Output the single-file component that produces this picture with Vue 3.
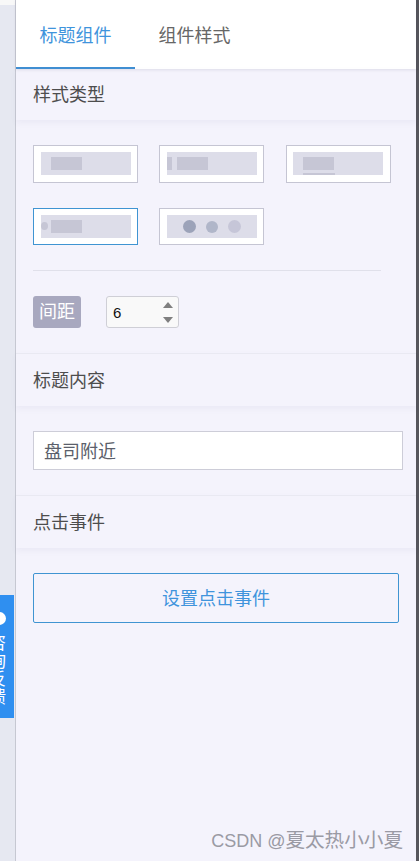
<template>
  <div class="page">
    <div class="side-strip">
      <div class="feedback">
        <span class="feedback-dot"></span>
        <span class="feedback-text">咨询反馈</span>
      </div>
    </div>

    <div class="panel">
      <div class="tabs">
        <div
          v-for="(tab, i) in tabs"
          :key="tab"
          :class="['tab', i === 0 ? 'active' : '']"
        >
          {{ tab }}
        </div>
      </div>

      <div class="section-title first">样式类型</div>

      <div class="style-grid">
        <div
          v-for="item in styleTypes"
          :key="item.id"
          :class="['style-item', item.selected ? 'selected' : '']"
        >
          <div :class="['style-bar', item.kind === 'dots' ? 'bar-dots' : '']">
            <template v-if="item.kind === 'dots'">
              <i class="dot d1"></i>
              <i class="dot d2"></i>
              <i class="dot d3"></i>
            </template>
            <template v-else>
              <i v-if="item.kind === 'stripe'" class="stripe"></i>
              <i v-if="item.kind === 'circle'" class="circle"></i>
              <i class="block"></i>
              <i v-if="item.kind === 'under'" class="underline"></i>
            </template>
          </div>
        </div>
      </div>

      <div class="divider"></div>

      <div class="spacing-row">
        <span class="spacing-label">间距</span>
        <div class="number-input">
          <span class="number-value">6</span>
          <div class="arrows">
            <svg width="10" height="6" viewBox="0 0 10 6"><path d="M5 0 L10 6 L0 6 Z" fill="#7f7f7f" /></svg>
            <svg width="10" height="6" viewBox="0 0 10 6"><path d="M0 0 L10 0 L5 6 Z" fill="#7f7f7f" /></svg>
          </div>
        </div>
      </div>

      <div class="section-title">标题内容</div>
      <div class="section-body">
        <div class="text-input">盘司附近</div>
      </div>

      <div class="section-title">点击事件</div>
      <div class="section-body">
        <div class="event-btn">设置点击事件</div>
      </div>

      <div class="watermark">CSDN @<span class="watermark-name">夏太热小小夏</span></div>
    </div>
    <div class="right-edge"></div>
  </div>
</template>

<script setup>
const tabs = ['标题组件', '组件样式']

const styleTypes = [
  { id: 1, kind: 'plain' },
  { id: 2, kind: 'stripe' },
  { id: 3, kind: 'under' },
  { id: 4, kind: 'circle', selected: true },
  { id: 5, kind: 'dots' }
]
</script>

<style>
html,
body {
  margin: 0;
  background: #f8f8f8;
}
</style>

<style scoped>
.page {
  display: flex;
  width: 419px;
  height: 861px;
  overflow: hidden;
  font-family: "Noto Sans CJK SC", "Liberation Sans", sans-serif;
  color: #4d4d4d;
}

.side-strip {
  position: relative;
  flex: none;
  width: 15px;
  margin-top: 5px;
  background-color: #e6e8f1;
}

.feedback {
  position: absolute;
  left: 0;
  top: 590px;
  width: 14px;
  height: 123px;
  overflow: hidden;
  background-color: #2f8ff0;
  color: white;
}

.feedback-dot {
  position: absolute;
  left: -7px;
  top: 17px;
  width: 13px;
  height: 13px;
  border-radius: 50%;
  background-color: white;
}

.feedback-text {
  position: absolute;
  left: -11px;
  top: 38px;
  width: 17px;
  font-size: 17px;
  line-height: 18px;
}

.panel {
  position: relative;
  flex: 1;
  min-width: 0;
  border-left: 1px solid #c6c8d2;
  background-color: #f4f3fc;
}

.tabs {
  display: flex;
  height: 69px;
  background-color: white;
  box-shadow: 0 1px 3px rgba(60, 60, 90, 0.12);
}

.tab {
  width: 119px;
  height: 67px;
  line-height: 69px;
  text-align: center;
  font-size: 18px;
  color: #666;
}

.tab.active {
  color: #3f94dc;
  border-bottom: 2px solid #3f8ed2;
}

.section-title {
  height: 52px;
  line-height: 50px;
  padding-left: 17px;
  font-size: 18px;
  border-top: 1px solid #e9e9f2;
  box-shadow: 0 3px 6px rgba(90, 90, 130, 0.06);
}

.section-title.first {
  height: 51px;
  line-height: 49px;
  border-top: none;
}

.style-grid {
  display: grid;
  grid-template-columns: 126px 127px 105px;
  grid-template-rows: 38px 37px;
  row-gap: 25px;
  padding: 25px 0 0 17px;
}

.style-item {
  box-sizing: border-box;
  width: 105px;
  padding: 6px 0 0 7px;
  border: 1px solid #c5c5d3;
  background-color: white;
}

.style-item:nth-child(3) {
  padding-left: 6px;
}

.style-item.selected {
  border-color: #3f94d2;
}

.style-bar {
  position: relative;
  display: flex;
  align-items: center;
  width: 90px;
  height: 23px;
  padding-left: 10px;
  box-sizing: border-box;
  background-color: #dddde9;
}

.block {
  width: 31px;
  height: 13px;
  background-color: #c6c6d5;
}

.stripe {
  position: absolute;
  left: 0;
  top: 5px;
  width: 5px;
  height: 13px;
  background-color: #c6c6d5;
}

.circle {
  position: absolute;
  left: 0;
  top: 7px;
  width: 7px;
  height: 8px;
  border-radius: 50%;
  background-color: #c6c6d5;
}

.underline {
  position: absolute;
  left: 10px;
  bottom: 0;
  width: 32px;
  height: 2px;
  background-color: #c6c6d5;
}

.style-bar.bar-dots {
  justify-content: space-between;
  padding: 0 16px;
}

.dot {
  border-radius: 50%;
}

.d1 {
  width: 13px;
  height: 13px;
  background-color: #9ca3b9;
}

.d2 {
  width: 12px;
  height: 12px;
  background-color: #b0b6c9;
}

.d3 {
  width: 13px;
  height: 13px;
  background-color: #c6c6d8;
}

.divider {
  width: 348px;
  height: 1px;
  margin: 25px 0 0 17px;
  background-color: #e0e0ea;
}

.spacing-row {
  display: flex;
  align-items: center;
  height: 32px;
  margin-top: 25px;
  margin-bottom: 25px;
  padding-left: 17px;
}

.spacing-label {
  width: 48px;
  height: 32px;
  line-height: 28px;
  text-align: center;
  font-size: 18px;
  border-radius: 3px;
  color: white;
  background-color: #a8a8bf;
}

.number-input {
  box-sizing: border-box;
  display: flex;
  align-items: center;
  justify-content: space-between;
  width: 73px;
  height: 32px;
  margin-left: 25px;
  padding: 0 5px 0 6px;
  border: 1px solid #cfcfd6;
  border-radius: 3px;
  background-color: #f9f9f9;
}

.number-value {
  font-family: "Liberation Sans", sans-serif;
  font-size: 15px;
  color: #111;
}

.arrows {
  display: flex;
  flex-direction: column;
  gap: 9px;
}

.arrows svg {
  display: block;
}

.section-body {
  padding: 25px 13px 25px 17px;
}

.text-input {
  box-sizing: border-box;
  height: 39px;
  padding-left: 10px;
  line-height: 36px;
  font-size: 18px;
  color: #5b5f6b;
  border: 1px solid #cdcdd8;
  background-color: white;
}

.event-btn {
  box-sizing: border-box;
  width: 366px;
  height: 50px;
  line-height: 46px;
  text-align: center;
  font-size: 18px;
  color: #3f94dc;
  border: 1px solid #3f94d2;
  border-radius: 2px;
}

.watermark {
  position: absolute;
  right: 13px;
  bottom: 8px;
  font-family: "Liberation Sans", "Noto Sans CJK SC", sans-serif;
  font-size: 18px;
  color: #9a9aa4;
}

.watermark-name {
  font-family: "Noto Sans CJK SC", sans-serif;
  font-size: 19.6px;
}

.right-edge {
  flex: none;
  width: 3px;
  background-color: #56565c;
}
</style>
